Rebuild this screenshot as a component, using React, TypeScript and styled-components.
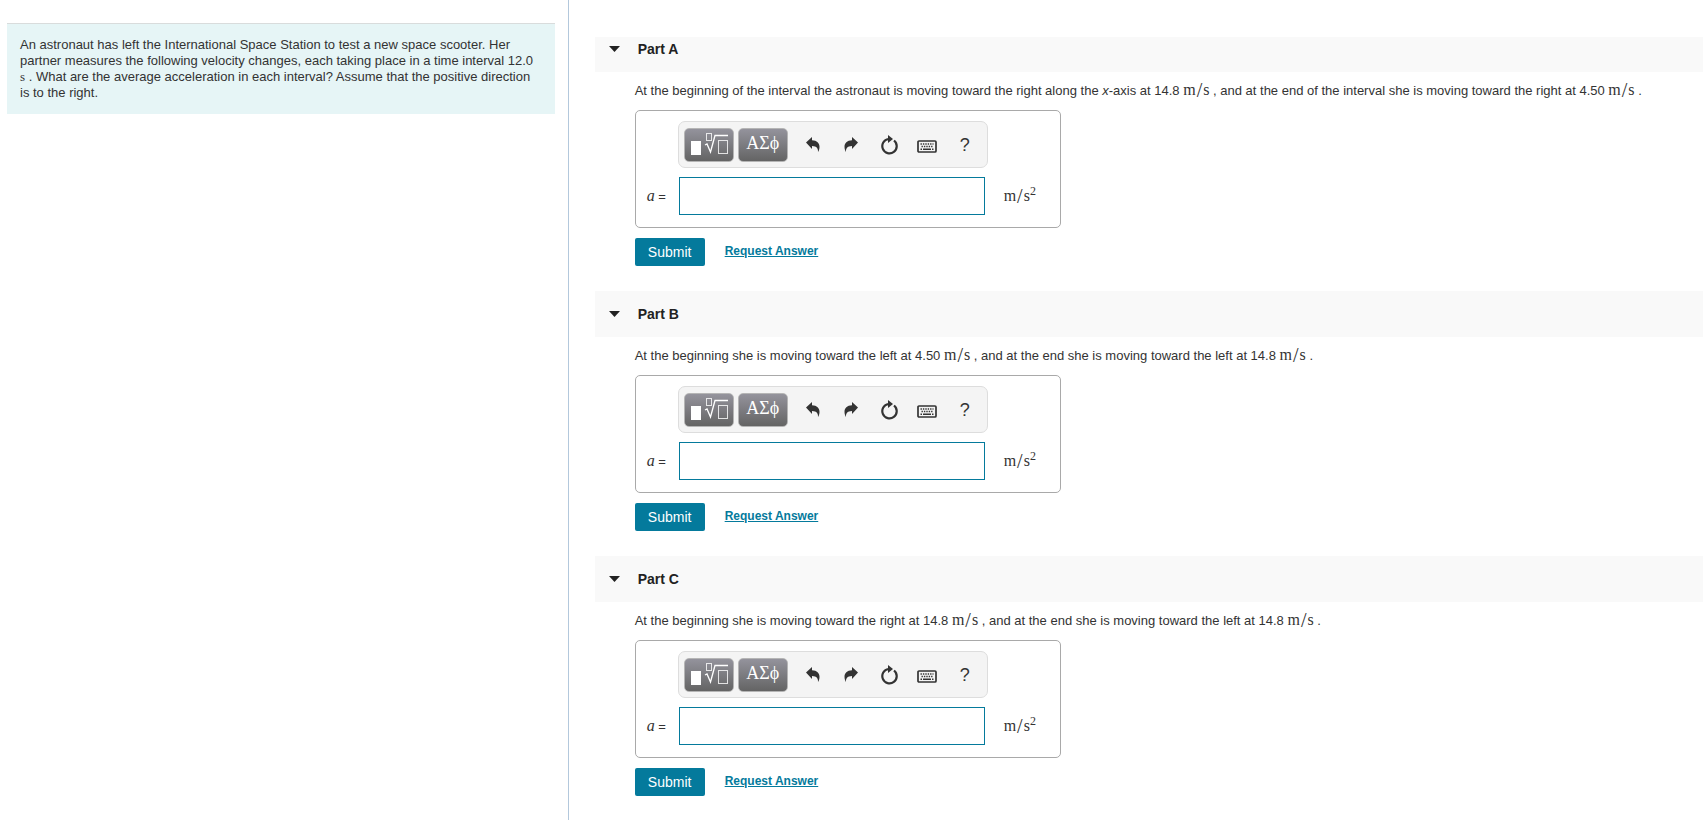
import React from "react";
import styled, { createGlobalStyle } from "styled-components";

const sans = `Arial, "Liberation Sans", sans-serif`;
const serif = `"Liberation Serif", "Times New Roman", serif`;
const teal = "#047a9c";

const GlobalStyle = createGlobalStyle`
  *, *::before, *::after { box-sizing: border-box; }
  body {
    margin: 0;
    background: #fff;
    color: #333;
    font: 13px/16px ${sans};
  }
`;

const Page = styled.div`
  display: grid;
  grid-template-columns: minmax(0, 1fr) minmax(0, 2fr);
  min-height: 100vh;
`;

const Sidebar = styled.aside`
  margin-right: -1px;
  padding: 23px 13px 0 7px;
  border-right: 1px solid #b3c8dc;
`;

const Problem = styled.p`
  margin: 0;
  padding: 13px 16px 13px 13px;
  border-top: 1px solid #d9dcdc;
  background: #e6f5f6;
`;

const Parts = styled.main`
  display: flex;
  flex-direction: column;
  gap: 25px;
  padding: 37px 0 22px 27px;
  overflow: hidden;
`;

const PartHeader = styled.header<{ $cut?: boolean }>`
  display: flex;
  align-items: flex-end;
  height: ${(p) => (p.$cut ? 35 : 46)}px;
  background: #f9f9f9;
`;

const Toggle = styled.button`
  display: flex;
  align-items: center;
  gap: 18px;
  padding: 0 14px 14px;
  border: 0;
  background: none;
  color: #222;
  font: bold 14px/18px ${sans};
`;

const PartBody = styled.div`
  padding-left: 40px;
`;

const Prompt = styled.p`
  height: 38px;
  margin: 0;
  line-height: 38px;
  white-space: nowrap;
`;

const MathText = styled.span<{ $italic?: boolean }>`
  font-family: ${serif};
  font-size: 16px;
  line-height: 16px;
  font-style: ${(p) => (p.$italic ? "italic" : "normal")};
`;

const SecondUnit = styled.span`
  font-family: ${serif};
`;

const NoWrap = styled.span`
  white-space: nowrap;
`;

const Slash = styled.span`
  padding: 0 1px;
  font-size: 20px;
  line-height: 16px;
  vertical-align: -2px;
`;

const Power = styled.sup`
  font-size: 12px;
  line-height: 0;
`;

const AnswerBox = styled.div`
  display: grid;
  grid-template-columns: 31px 310px auto;
  grid-template-rows: 47px 38px;
  row-gap: 9px;
  align-items: center;
  width: 426px;
  height: 118px;
  padding: 10px 0 0 11px;
  border: 1px solid #a9a9a9;
  border-radius: 5px;
`;

const Toolbar = styled.div`
  grid-column: 2 / 3;
  display: flex;
  align-items: center;
  height: 47px;
  padding: 0 0 0 5px;
  border: 1px solid #ddd;
  border-radius: 7px;
  background: #f4f4f4;
`;

const Palettes = styled.div`
  display: flex;
  gap: 4px;
  margin-right: 6px;
`;

const PaletteButton = styled.button`
  display: flex;
  align-items: center;
  justify-content: center;
  width: 50px;
  height: 34px;
  padding: 0 0 4px;
  border: 1px solid #b5b5b5;
  border-radius: 5px;
  background: linear-gradient(#94939c, #646464);
  color: #fff;
  font: 18px/20px ${serif};
`;

const ToolButton = styled.button`
  display: flex;
  align-items: center;
  justify-content: center;
  width: 38px;
  height: 33px;
  padding: 0;
  border: 0;
  background: none;
  color: #333;
  font: 18px/20px ${sans};
`;

const AnswerLabel = styled.label`
  grid-column: 1 / 2;
  white-space: nowrap;
`;

const AnswerInput = styled.input`
  width: 306px;
  height: 38px;
  margin-left: 1px;
  padding: 0 8px;
  border: 1px solid ${teal};
  border-radius: 0;
  background: #fff;
  font: 16px/20px ${serif};
`;

const Unit = styled.span`
  padding-left: 16px;
`;

const Actions = styled.div`
  display: flex;
  align-items: center;
  gap: 20px;
  margin-top: 10px;
`;

const Submit = styled.button`
  width: 70px;
  height: 28px;
  padding: 0;
  border: 0;
  border-radius: 2px;
  background: ${teal};
  color: #fff;
  font: 14px/18px ${sans};
`;

const RequestLink = styled.a`
  padding-bottom: 2px;
  color: ${teal};
  font-size: 12px;
  font-weight: bold;
`;

const Caret = () => (
  <svg width="11" height="6" viewBox="0 0 11 6" aria-hidden="true">
    <path d="M0 0h11L5.500 6z" fill="#222" />
  </svg>
);

const TemplateIcon = () => (
  <svg width="38" height="24" viewBox="0 0 38 24" fill="none" stroke="#fff" aria-hidden="true">
    <rect x="1" y="10" width="10" height="14" fill="#fff" stroke="none" />
    <rect x="16.500" y="2.500" width="5" height="7" strokeOpacity=".8" />
    <path d="M15 14l2-1 3.500 8L25 4.500h13" strokeWidth="1.300" />
    <rect x="28.500" y="9.500" width="9" height="13" strokeOpacity=".8" />
  </svg>
);

const UndoIcon = ({ flip = false }: { flip?: boolean }) => (
  <svg width="14" height="16" viewBox="0 0 14 16" aria-hidden="true">
    <path
      transform={flip ? "matrix(-1 0 0 1 14 0)" : undefined}
      d="M0 5.500L6 0v3.200c5 .2 7.500 3 7.500 6.500 0 2-.5 3.900-1.500 5.300.3-3.400-1.100-6-6-6.100v3z"
      fill="#333"
    />
  </svg>
);

const ResetIcon = () => (
  <svg width="18" height="20" viewBox="0 0 18 20" aria-hidden="true">
    <path d="M14 5.500A7.200 7.200 0 1 1 8.500 4" fill="none" stroke="#333" strokeWidth="2.200" />
    <path d="M8 0l5 4-5 4z" fill="#333" />
  </svg>
);

const KeyboardIcon = () => (
  <svg width="20" height="17" viewBox="0 -4 20 17" fill="none" stroke="#333" aria-hidden="true">
    <rect x="1" y="1" width="18" height="11" rx="1" strokeWidth="1.700" />
    <path d="M3.500 4h13" strokeWidth="1.400" strokeDasharray="1.400 1" />
    <path d="M4.500 6.500h12" strokeWidth="1.400" strokeDasharray="1.400 1" />
    <path d="M3.500 9.200h1.500M6 9.200h8M15 9.200h1.500" strokeWidth="1.500" />
  </svg>
);

const MetresPerSecond = ({ squared = false }: { squared?: boolean }) => (
  <MathText>
    m<Slash>/</Slash>s{squared && <Power>2</Power>}
  </MathText>
);

interface PartProps {
  name: string;
  cut?: boolean;
  children: React.ReactNode;
}

const Part = ({ name, cut, children }: PartProps) => {
  const id = `answer-${name.toLowerCase()}`;
  return (
    <section>
      <PartHeader $cut={cut}>
        <Toggle type="button" aria-expanded="true">
          <Caret />
          Part {name}
        </Toggle>
      </PartHeader>
      <PartBody>
        <Prompt>{children}</Prompt>
        <AnswerBox>
          <Toolbar role="toolbar" aria-label="Equation tools">
            <Palettes>
              <PaletteButton type="button" aria-label="Templates">
                <TemplateIcon />
              </PaletteButton>
              <PaletteButton type="button">ΑΣϕ</PaletteButton>
            </Palettes>
            <ToolButton type="button" aria-label="Undo">
              <UndoIcon />
            </ToolButton>
            <ToolButton type="button" aria-label="Redo">
              <UndoIcon flip />
            </ToolButton>
            <ToolButton type="button" aria-label="Reset">
              <ResetIcon />
            </ToolButton>
            <ToolButton type="button" aria-label="Keyboard shortcuts">
              <KeyboardIcon />
            </ToolButton>
            <ToolButton type="button">?</ToolButton>
          </Toolbar>
          <AnswerLabel htmlFor={id}>
            <MathText $italic>a</MathText> =
          </AnswerLabel>
          <AnswerInput id={id} type="text" />
          <Unit>
            <MetresPerSecond squared />
          </Unit>
        </AnswerBox>
        <Actions>
          <Submit type="button">Submit</Submit>
          <RequestLink href="#">Request Answer</RequestLink>
        </Actions>
      </PartBody>
    </section>
  );
};

export default function App() {
  return (
    <>
      <GlobalStyle />
      <Page>
        <Sidebar>
          <Problem>
            An astronaut has left the International Space Station to test a new space scooter. Her
            partner measures the following velocity changes, each taking place in a time interval
            12.0{" "}
            <NoWrap>
              <SecondUnit>s</SecondUnit> .
            </NoWrap>{" "}
            What are the average acceleration in each interval? Assume that the positive direction
            is to the right.
          </Problem>
        </Sidebar>
        <Parts>
          <Part name="A" cut>
            At the beginning of the interval the astronaut is moving toward the right along the{" "}
            <i>x</i>-axis at 14.8 <MetresPerSecond /> , and at the end of the interval she is moving
            toward the right at 4.50 <MetresPerSecond /> .
          </Part>
          <Part name="B">
            At the beginning she is moving toward the left at 4.50 <MetresPerSecond /> , and at the
            end she is moving toward the left at 14.8 <MetresPerSecond /> .
          </Part>
          <Part name="C">
            At the beginning she is moving toward the right at 14.8 <MetresPerSecond /> , and at the
            end she is moving toward the left at 14.8 <MetresPerSecond /> .
          </Part>
        </Parts>
      </Page>
    </>
  );
}
